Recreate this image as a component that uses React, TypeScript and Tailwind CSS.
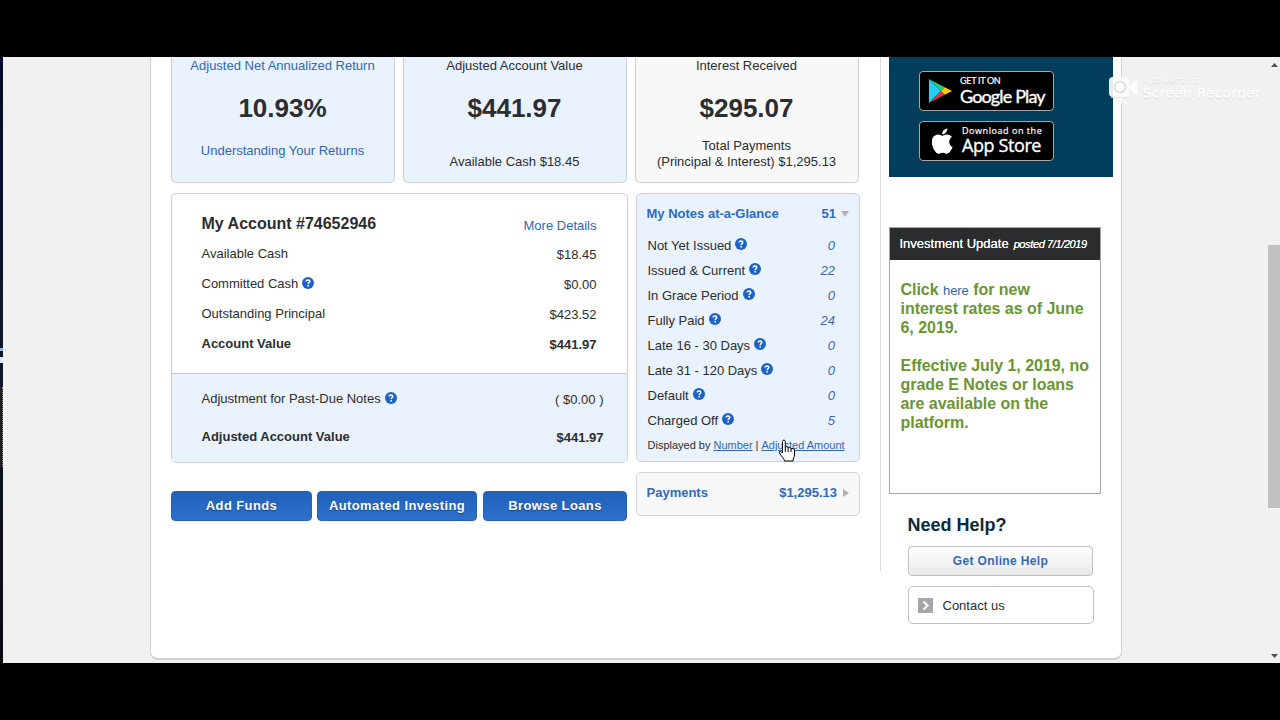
import type { ReactNode } from "react";

function HelpIcon() {
  return (
    <svg width="12" height="12" viewBox="0 0 12 12" className="mb-[3px] ml-1 shrink-0">
      <circle cx="6" cy="6" r="6" fill="#1b63c6" />
      <path d="M4.2 4.6C4.2 3.5 5 2.9 6 2.9S7.8 3.5 7.8 4.5C7.8 5.6 6.2 5.7 6.2 7" fill="none" stroke="#fff" strokeWidth="1.5" />
      <rect x="5.4" y="7.9" width="1.6" height="1.6" fill="#fff" />
    </svg>
  );
}

function Stat({ title, value, plain, children }: { title: ReactNode; value: string; plain?: boolean; children: ReactNode }) {
  return (
    <div
      className={`flex h-[126px] w-[224px] flex-col items-center rounded-b-[5px] border border-t-0 border-[#cdd1d6] pr-px text-center ${plain ? "bg-[#f8f8f8]" : "bg-[#eaf2fe]"}`}
    >
      <div className="mt-px h-4 leading-4">{title}</div>
      <div className="mt-[18px] h-8 text-[26px] leading-8 font-bold">{value}</div>
      {children}
    </div>
  );
}

function AccountRow({ label, value, help, bold }: { label: string; value: string; help?: boolean; bold?: boolean }) {
  return (
    <div className={`flex h-[30px] items-center justify-between ${bold ? "font-bold" : ""}`}>
      <span className="flex items-center">
        {label}
        {help && <HelpIcon />}
      </span>
      <span className="pt-px">{value}</span>
    </div>
  );
}

const notes: [string, string][] = [
  ["Not Yet Issued", "0"],
  ["Issued & Current", "22"],
  ["In Grace Period", "0"],
  ["Fully Paid", "24"],
  ["Late 16 - 30 Days", "0"],
  ["Late 31 - 120 Days", "0"],
  ["Default", "0"],
  ["Charged Off", "5"],
];

function BlueButton({ className, children }: { className: string; children: ReactNode }) {
  return (
    <button
      className={`h-[30px] rounded-[4px] border border-[#2b62ad] bg-linear-to-b from-[#2061b8] to-[#2d70cd] text-[13px] font-bold tracking-[0.4px] text-white [text-shadow:0_1px_1px_#17407d] ${className}`}
    >
      {children}
    </button>
  );
}

function PlayBadge() {
  return (
    <div className="flex h-10 w-[135px] items-center rounded-[4px] border border-[#a6a6a6] bg-black pl-2 text-white">
      <svg width="25" height="28" viewBox="0 0 26 28" className="shrink-0">
        <path d="M1 1.5V26.5L13.5 14Z" fill="#1fd0f5" />
        <path d="M1 1.5L17.5 10L13.5 14Z" fill="#25d07c" />
        <path d="M1 26.5L17.5 18L13.5 14Z" fill="#e0344b" />
        <path d="M17.5 10L25 14L17.5 18L13.5 14Z" fill="#fdc80f" />
      </svg>
      <div className="ml-[7px] flex flex-col whitespace-nowrap">
        <span className="h-[11px] font-['Lato',sans-serif] text-[9px] leading-[10px] tracking-[-0.3px] [-webkit-text-stroke:0.2px_#fff]">GET IT ON</span>
        <span className="h-[20px] font-['Lato',sans-serif] text-[18px] leading-[18px] tracking-[-0.85px] [-webkit-text-stroke:0.35px_#fff]">Google Play</span>
      </div>
    </div>
  );
}

function AppleBadge() {
  return (
    <div className="flex h-10 w-[135px] items-center rounded-[4px] border border-[#a6a6a6] bg-black pl-[12px] text-white">
      <svg width="21" height="26" viewBox="4 3 16 20" className="shrink-0" fill="#fff">
        <path d="M17.2 13.8c0-2.5 2-3.7 2.1-3.8-1.2-1.7-3-1.9-3.6-2-1.5-.2-3 .9-3.8.9s-2-.9-3.2-.9c-1.7 0-3.2 1-4.1 2.4-1.7 3-.4 7.400 1.300 9.900.8 1.200 1.800 2.500 3.100 2.500 1.200-.1 1.700-.8 3.200-.8s1.900.8 3.200.8 2.200-1.200 3-2.400c.9-1.400 1.300-2.700 1.300-2.800-.1 0-2.500-1-2.500-3.800zM14.700 6.400c.7-.8 1.100-2 1-3.100-1 0-2.200.7-2.900 1.500-.6.700-1.200 1.900-1 3 1.100.1 2.200-.6 2.900-1.400z" />
      </svg>
      <div className="ml-[9px] flex flex-col whitespace-nowrap">
        <span className="h-[13px] font-['Open_Sans',sans-serif] text-[9px] leading-[13px] tracking-[0.55px] [-webkit-text-stroke:0.2px_#fff]">Download on the</span>
        <span className="h-[22px] font-['Open_Sans',sans-serif] text-[18px] leading-[16px] tracking-[-0.4px] [-webkit-text-stroke:0.35px_#fff]">App Store</span>
      </div>
    </div>
  );
}

function Watermark() {
  return (
    <div className="absolute top-[18px] left-[1109px] flex text-white opacity-90">
      <svg width="29" height="32" viewBox="0 0 29 32" fill="none" stroke="#fff">
        <rect x="0" y="2" width="20" height="20" rx="4" fill="#fff" stroke="none" />
        <path d="M2 22.500H18" stroke="#dcdcdc" />
        <circle cx="11" cy="12" r="5.500" stroke="#d5d9dc" strokeWidth="1.500" />
        <path d="M20.500 10L28.500 5V20L20.500 15Z" fill="#fff" stroke="none" />
        <path d="M12 22V29M12 24L6 29M12 24L18 29" strokeWidth="1.300" />
      </svg>
      <div className="ml-[5px] flex flex-col whitespace-nowrap [text-shadow:0_1px_1px_#cfcfcf]">
        <span className="h-[11px] font-['DejaVu_Sans',sans-serif] text-[9px] leading-[11px] tracking-[0.5px]">Apowersoft</span>
        <span className="h-[14px] font-['DejaVu_Sans',sans-serif] text-[13.5px] leading-[14px] tracking-[0.45px] [-webkit-text-stroke:0.5px_#fff]">Screen Recorder</span>
      </div>
    </div>
  );
}

export default function App() {
  return (
    <div className="flex h-[720px] w-[1280px] flex-col bg-black pt-[57px] font-['Liberation_Sans',Arial,sans-serif] text-[13px] text-[#2b2d30]">
      <div className="relative flex h-[606px] overflow-hidden bg-[#f1f1f1]">
        <div className="flex w-[3px] flex-col bg-linear-to-b from-[#030a2c] via-[#101828] to-[#0b0b12]">
          <div className="mt-[291px] h-[3px] bg-[#8fb0e0]" />
          <div className="mt-[6px] h-[6px] bg-[#dfe9ff]" />
          <div className="mt-[24px] h-[80px] border-r border-dotted border-[#88857f] bg-[#1d1d1d]" />
        </div>
        <main className="ml-[147px] flex h-[603px] w-[972px] rounded-b-[8px] border border-t-0 border-b-2 border-[#cdd0d3] bg-white pl-5">
          <div className="flex h-[514px] w-[710px] flex-col border-r border-[#dcdcdc]">
            <div className="flex gap-2">
              <Stat title={<a className="text-[#3366b0]">Adjusted Net Annualized Return</a>} value="10.93%">
                <a className="mt-[17px] text-[#3366b0]">Understanding Your Returns</a>
              </Stat>
              <Stat title="Adjusted Account Value" value="$441.97">
                <div className="mt-[30px] leading-4">Available Cash $18.45</div>
              </Stat>
              <Stat title="Interest Received" value="$295.07" plain>
                <div className="mt-[14px] leading-4">
                  Total Payments
                  <br />
                  (Principal &amp; Interest) $1,295.13
                </div>
              </Stat>
            </div>
            <div className="mt-[10px] flex gap-2">
              <div className="flex w-[457px] flex-col">
                <section className="h-[270px] overflow-hidden rounded-[5px] border border-[#cdd1d6]">
                  <div className="h-[180px] border-b border-[#c3c7cc] pt-[19px] pr-[30.5px] pl-[29.5px]">
                    <div className="flex h-[26px] items-start justify-between">
                      <h2 className="text-[16px] leading-[21px] font-bold">My Account #74652946</h2>
                      <a className="leading-[26px] text-[#3366b0]">More Details</a>
                    </div>
                    <AccountRow label="Available Cash" value="$18.45" />
                    <AccountRow label="Committed Cash" value="$0.00" help />
                    <AccountRow label="Outstanding Principal" value="$423.52" />
                    <AccountRow label="Account Value" value="$441.97" bold />
                  </div>
                  <div className="flex h-[88px] flex-col gap-2 bg-[#eaf2fe] pt-[10px] pr-[23.5px] pl-[29.5px]">
                    <AccountRow label="Adjustment for Past-Due Notes" value="( $0.00 )" help />
                    <AccountRow label="Adjusted Account Value" value="$441.97" bold />
                  </div>
                </section>
                <div className="mt-7 flex">
                  <BlueButton className="w-[141px]">Add Funds</BlueButton>
                  <BlueButton className="ml-[5px] w-[160px]">Automated Investing</BlueButton>
                  <BlueButton className="ml-[6px] w-[144px]">Browse Loans</BlueButton>
                </div>
              </div>
              <div className="flex w-[224px] flex-col gap-[10px]">
                <section className="h-[269px] rounded-[5px] border border-[#cdd1d6] bg-[#eaf2fe] pr-[10px] pl-[9.5px]">
                  <div className="flex h-[39px] items-center pt-px font-bold text-[#2c6bc0]">
                    <span>My Notes at-a-Glance</span>
                    <span className="ml-auto">51</span>
                    <svg width="8" height="6" viewBox="0 0 8 6" className="mb-px ml-[5px]">
                      <path d="M0 0H8L4 6Z" fill="#b3b3ae" />
                    </svg>
                  </div>
                  {notes.map(([label, count]) => (
                    <div key={label} className="flex h-[25px] items-center pr-[14px] pl-px">
                      <span>{label}</span>
                      <HelpIcon />
                      <span className="ml-auto text-[#3f69b3] italic">{count}</span>
                    </div>
                  ))}
                  <div className="flex h-[24px] items-center gap-[3px] pl-px text-[11px] whitespace-nowrap">
                    <span>Displayed by</span>
                    <a className="text-[#3366b0] underline">Number</a>
                    <span>|</span>
                    <a className="text-[#3366b0] underline">Adjusted Amount</a>
                  </div>
                </section>
                <section className="flex h-[44px] items-center rounded-[5px] border border-[#d3d5d8] bg-[#f8f8f8] pr-[10px] pb-[2px] pl-[9.5px] font-bold text-[#2c6bc0]">
                  <span>Payments</span>
                  <span className="ml-auto">$1,295.13</span>
                  <svg width="6" height="8" viewBox="0 0 6 8" className="ml-[6px]">
                    <path d="M0 0V8L6 4Z" fill="#b3b3ae" />
                  </svg>
                </section>
              </div>
            </div>
          </div>
          <aside className="ml-2 flex w-[224px] flex-col">
            <div className="flex h-[120px] flex-col gap-[10px] bg-[#023e5c] pt-[14px] pl-[30px]">
              <PlayBadge />
              <AppleBadge />
            </div>
            <section className="mt-[50px] h-[267px] w-[212px] border border-[#a6a6a6]">
              <div className="flex h-8 items-center bg-[#2b2c2e] pl-[9.5px] whitespace-nowrap text-white">
                <span className="[text-shadow:0_0_0.5px_#fff]">Investment Update</span>
                <em className="ml-[5px] text-[11px] tracking-[-0.38px] [text-shadow:0_0_0.5px_#fff]">posted 7/1/2019</em>
              </div>
              <div className="pt-5 pl-[10.5px] text-[16px] leading-[19px] font-bold tracking-[-0.04px] whitespace-nowrap text-[#6b9432]">
                <p>
                  Click <a className="text-[13px] leading-none font-normal text-[#3366b0]">here</a> for new
                  <br />
                  interest rates as of June
                  <br />
                  6, 2019.
                </p>
                <p className="mt-[19px]">
                  Effective July 1, 2019, no
                  <br />
                  grade E Notes or loans
                  <br />
                  are available on the
                  <br />
                  platform.
                </p>
              </div>
            </section>
            <h3 className="mt-5 ml-[18.5px] h-[22px] text-[18px] leading-[22px] font-bold text-[#0c2740]">Need Help?</h3>
            <button className="mt-[10px] ml-[19px] h-[30px] w-[185px] shrink-0 rounded-[4px] border border-[#bfbfbf] bg-linear-to-b from-white to-[#e9e9e9] text-[12px] font-bold tracking-[0.35px] text-[#3368b8]">
              Get Online Help
            </button>
            <div className="mt-[10px] ml-[19px] flex h-[38px] w-[186px] items-center rounded-[5px] border border-[#c0c0c0] pl-[9px]">
              <svg width="15" height="15" viewBox="0 0 15 15">
                <path d="M0 0H15V15H0Z" fill="#a6a6a6" />
                <path d="M5.500 3.500L9.500 7.500L5.500 11.500" fill="none" stroke="#fff" strokeWidth="2.200" />
              </svg>
              <span className="ml-[9.5px] pt-[2px]">Contact us</span>
            </div>
          </aside>
        </main>
        <div className="ml-auto flex w-3 flex-col items-start">
          <svg width="12" height="188" viewBox="0 0 12 188">
            <path d="M3 10L6.500 6L10 10Z" fill="#505050" />
          </svg>
          <div className="h-[263px] w-3 bg-[#c1c1c1]" />
          <svg width="12" height="155" viewBox="0 0 12 155">
            <path d="M3 146L6.500 150L10 146Z" fill="#505050" />
          </svg>
        </div>
        <Watermark />
        <svg width="18" height="24" viewBox="0 0 18 24" className="absolute top-[382px] left-[778px]">
          <path d="M4.500 14V2.500C4.500.6 7.300.6 7.300 2.500V8.500C7.500 7.300 10 7.400 10.100 9C10.800 8 12.900 8.300 13 9.800C14 9 16.500 9.500 16.500 11.200V16C16.500 18 15 19 15 22H6.500C6.500 20 3.500 17.500 1.500 14C.8 12.500 2.500 11.500 4.500 14Z" fill="#fff" stroke="#000" />
          <path d="M7.300 8.500V13M10.100 9V13M13 10V13" stroke="#000" fill="none" />
        </svg>
      </div>
    </div>
  );
}
